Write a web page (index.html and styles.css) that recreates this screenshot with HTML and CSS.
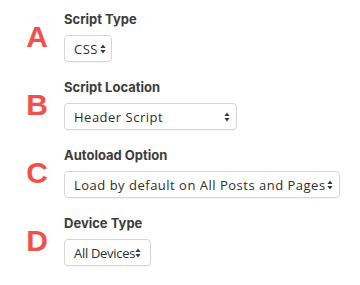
FILE: index.html
```html
<!DOCTYPE html>
<html>
<head>
<meta charset="utf-8">
<link rel="stylesheet" href="styles.css">
</head>
<body>
<div class="form">
  <div class="section">
    <div class="letter">A</div>
    <div class="field">
      <div class="label">Script Type</div>
      <div class="select w-a"><span>CSS</span><svg class="arrows" width="6" height="10" viewBox="0 0 6 10"><path d="M3 0.5 L5.6 4 L0.4 4 Z M3 9.5 L5.6 6 L0.4 6 Z" fill="#3a3a3a"/></svg></div>
    </div>
  </div>
  <div class="section">
    <div class="letter">B</div>
    <div class="field">
      <div class="label">Script Location</div>
      <div class="select w-b"><span>Header Script</span><svg class="arrows" width="6" height="10" viewBox="0 0 6 10"><path d="M3 0.5 L5.6 4 L0.4 4 Z M3 9.5 L5.6 6 L0.4 6 Z" fill="#3a3a3a"/></svg></div>
    </div>
  </div>
  <div class="section">
    <div class="letter">C</div>
    <div class="field">
      <div class="label">Autoload Option</div>
      <div class="select w-c"><span>Load by default on All Posts and Pages</span><svg class="arrows" width="6" height="10" viewBox="0 0 6 10"><path d="M3 0.5 L5.6 4 L0.4 4 Z M3 9.5 L5.6 6 L0.4 6 Z" fill="#3a3a3a"/></svg></div>
    </div>
  </div>
  <div class="section">
    <div class="letter">D</div>
    <div class="field">
      <div class="label">Device Type</div>
      <div class="select w-d"><span>All Devices</span><svg class="arrows" width="6" height="10" viewBox="0 0 6 10"><path d="M3 0.5 L5.6 4 L0.4 4 Z M3 9.5 L5.6 6 L0.4 6 Z" fill="#3a3a3a"/></svg></div>
    </div>
  </div>
</div>
</body>
</html>
```
FILE: styles.css
```css
html, body {
  margin: 0;
  padding: 0;
  background: #ffffff;
}
body {
  font-family: "Liberation Sans", Arial, sans-serif;
  width: 360px;
  height: 285px;
  overflow: hidden;
}
.form {
  display: flex;
  flex-direction: column;
  gap: 17px;
  padding-top: 11px;
}
.section {
  display: flex;
  align-items: center;
}
.letter {
  width: 54px;
  padding-left: 10px;
  text-align: center;
  font-family: "Liberation Sans", Arial, sans-serif;
  font-size: 30px;
  font-weight: bold;
  line-height: 30px;
  color: #f4504b;
  margin-top: 1px;
}
.field {
  display: flex;
  flex-direction: column;
  gap: 8px;
}
.label {
  font-family: Inter, "Liberation Sans", sans-serif;
  font-size: 13px;
  line-height: 16px;
  font-weight: bold;
  color: #3d3d3d;
}
.select {
  box-sizing: border-box;
  height: 27px;
  border: 1px solid #d6d6d6;
  border-radius: 4px;
  background: #fff;
  box-shadow: 0 1px 1px rgba(0,0,0,0.04);
  display: flex;
  align-items: center;
  justify-content: space-between;
  padding: 0 6px 0 9px;
  font-family: "Open Sans", "Liberation Sans", sans-serif;
  font-size: 13px;
  line-height: 16px;
  letter-spacing: 0.5px;
  white-space: nowrap;
  color: #2e2e2e;
}
.arrows {
  display: block;
  flex: none;
}
.w-a { width: 48px; padding-right: 5px; }
.w-b { width: 173px; }
.w-c { width: 276px; }
.w-d { width: 87px; padding-right: 9px; letter-spacing: -0.3px; }
```
